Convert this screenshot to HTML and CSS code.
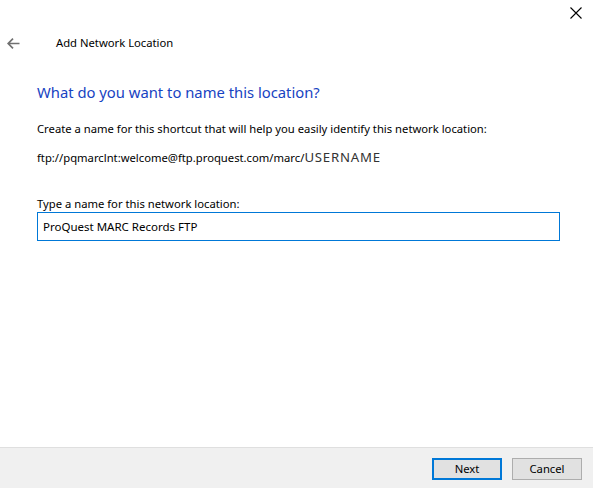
FILE: index.html
```html
<!DOCTYPE html>
<html>
<head>
<meta charset="utf-8">
<link rel="stylesheet" href="styles.css">
</head>
<body>
<div class="window">
  <div class="close" aria-label="Close">
    <svg width="12" height="12" viewBox="0 0 12 12"><path d="M0.5 0.5 L11.5 11.5 M11.5 0.5 L0.5 11.5" stroke="#000" stroke-width="1.1" fill="none"/></svg>
  </div>
  <div class="header">
    <span class="back">
      <svg width="13" height="11" viewBox="0 0 13 11"><path d="M6 0.7 L1.2 5.5 L6 10.3 M1.2 5.5 H12.5" stroke="#707070" stroke-width="1.7" fill="none"/></svg>
    </span>
    <span class="header-title">Add Network Location</span>
  </div>
  <div class="content">
    <h1 class="main">What do you want to name this location?</h1>
    <p class="text first">Create a name for this shortcut that will help you easily identify this network location:</p>
    <p class="text url">ftp://pqmarclnt:welcome@ftp.proquest.com/marc/<span class="user">USERNAME</span></p>
    <label class="text label">Type a name for this network location:</label>
    <div class="input">ProQuest MARC Records FTP</div>
  </div>
  <div class="spacer"></div>
  <div class="footer">
    <button class="btn primary">Next</button>
    <button class="btn">Cancel</button>
  </div>
</div>
</body>
</html>
```
FILE: styles.css
```css
html, body {
  margin: 0;
  padding: 0;
  background: #ffffff;
}
.window {
  position: relative;
  width: 593px;
  height: 488px;
  display: flex;
  flex-direction: column;
  font-family: "Noto Sans", "Open Sans", sans-serif;
  font-size: 11.25px;
  color: #000;
  overflow: hidden;
}
.close {
  position: absolute;
  top: 7px;
  left: 570px;
  width: 12px;
  height: 12px;
  line-height: 0;
}
.header {
  display: flex;
  align-items: center;
  height: 20px;
  margin-top: 33px;
}
.back {
  width: 13px;
  height: 11px;
  margin-left: 7px;
  line-height: 0;
}
.header-title {
  margin-left: 36px;
  line-height: 20px;
}
.content {
  padding: 0 33px 0 37px;
}
.main {
  margin: 28px 0 0 0;
  font-size: 14.8px;
  font-weight: normal;
  line-height: 22px;
  color: #1743c2;
}
.text {
  display: block;
  margin: 0;
  line-height: 16px;
}
.first {
  margin-top: 18px;
}
.url {
  margin-top: 13px;
  height: 16px;
}
.user {
  font-size: 13.2px;
  line-height: 12px;
  letter-spacing: 0.8px;
  color: #333;
}
.label {
  margin-top: 30px;
}
.input {
  box-sizing: border-box;
  margin-top: 0;
  width: 523px;
  height: 29px;
  border: 1px solid #0078d7;
  padding: 0 5px;
  line-height: 27px;
  font-size: 11.5px;
}
.spacer {
  flex: 1;
}
.footer {
  height: 41px;
  border-top: 1px solid #dfdfdf;
  background: #f0f0f0;
  display: flex;
  justify-content: flex-end;
  align-items: flex-start;
  gap: 10px;
  padding: 10px 11px 0 0;
  box-sizing: border-box;
  flex: none;
}
.btn {
  box-sizing: border-box;
  width: 70px;
  height: 22px;
  margin: 0;
  padding: 0;
  background: #e1e1e1;
  border: 1px solid #adadad;
  font-family: inherit;
  font-size: 11.25px;
  color: #000;
  line-height: 18px;
}
.btn.primary {
  border: 2px solid #0078d7;
}
```
